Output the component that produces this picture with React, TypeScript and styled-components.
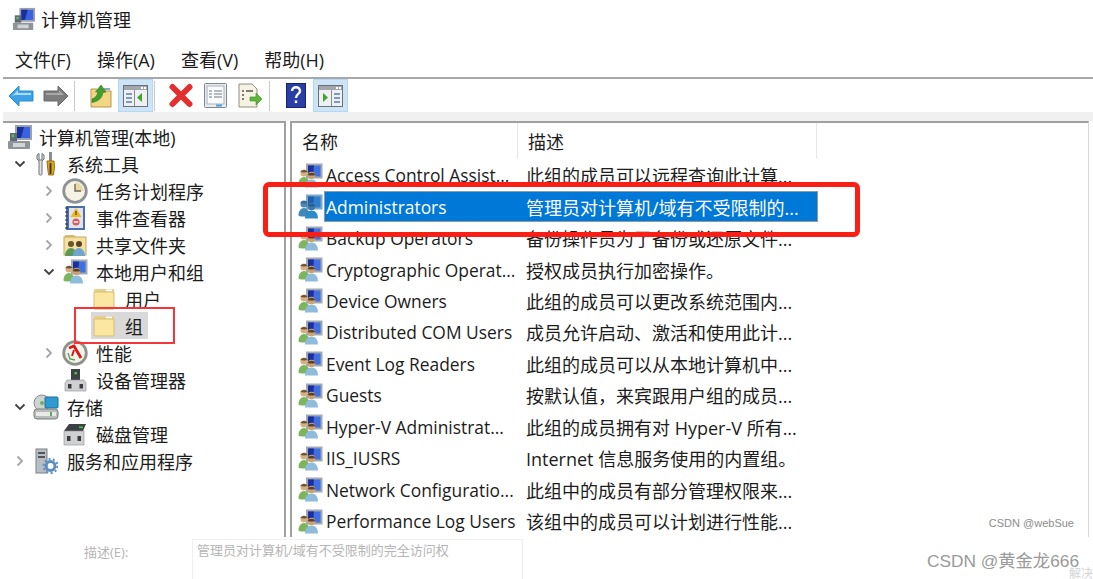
import React from 'react';
import styled, { createGlobalStyle } from 'styled-components';

const GlobalStyle = createGlobalStyle`
  html, body {
    margin: 0;
    padding: 0;
    background: #fff;
  }
  body {
    font-family: "Open Sans", "Noto Sans CJK SC", sans-serif;
    color: #1c1c1c;
  }
`;

const Window = styled.div`
  position: relative;
  width: 1093px;
  height: 579px;
  overflow: hidden;
  background: #fff;
`;

const TitleBar = styled.div`
  display: flex;
  align-items: center;
  gap: 5px;
  height: 37px;
  padding-left: 12px;
  font-size: 18px;
`;

const MenuBar = styled.div`
  box-sizing: border-box;
  display: flex;
  align-items: center;
  gap: 26px;
  height: 40px;
  padding: 4px 0 0 15px;
  font-size: 18px;
`;

const Toolbar = styled.div`
  display: flex;
  align-items: center;
  height: 33px;
  margin-left: 3px;
  border-top: 2px solid #a8a8a8;
`;

const ToolButton = styled.div<{ $active?: boolean }>`
  display: flex;
  align-items: center;
  justify-content: center;
  width: 35px;
  height: 33px;
  background: ${p => (p.$active ? '#cce4f7' : 'transparent')};
  box-shadow: ${p => (p.$active ? 'inset 0 0 0 1px #b5d7f3' : 'none')};
`;

const ToolDivider = styled.div`
  width: 1px;
  height: 30px;
  margin: 0 8px 0 1px;
  background: #c8c8c8;
`;

const Band = styled.div`
  height: 9px;
  margin-left: 3px;
  background: #f0f0f0;
`;

const Panes = styled.div`
  display: flex;
  gap: 4px;
  height: 416px;
  padding-left: 3px;
`;

const TreePane = styled.div`
  box-sizing: border-box;
  width: 283px;
  padding-left: 3px;
  border-top: 2px solid #a0a0a0;
  border-right: 2px solid #a0a0a0;
`;

const TreeRow = styled.div<{ $level: number; $root?: boolean }>`
  display: flex;
  align-items: center;
  height: 27px;
  padding-left: ${p => (p.$root ? 1 : p.$level * 29)}px;
  font-size: 18px;
  white-space: nowrap;
`;

const Twisty = styled.span`
  display: flex;
  align-items: center;
  justify-content: center;
  width: 27px;
  height: 27px;
  flex: none;
`;

const TreeItem = styled.div<{ $selected?: boolean; $root?: boolean }>`
  display: flex;
  align-items: center;
  gap: ${p => (p.$root ? 6 : 8)}px;
  height: 27px;
  padding-right: 5px;
  background: ${p => (p.$selected ? '#d9d9d9' : 'transparent')};
`;

const TreeIcon = styled.span`
  display: flex;
  align-items: center;
  justify-content: center;
  width: 26px;
  height: 27px;
  flex: none;
`;

const ListPane = styled.div`
  box-sizing: border-box;
  width: 799px;
  border-top: 2px solid #a0a0a0;
  border-left: 2px solid #a0a0a0;
  border-right: 1px solid #d8d8d8;
`;

const ListHeader = styled.div`
  display: flex;
  height: 35.5px;
  margin-bottom: 1px;
  font-size: 18px;
`;

const HeaderCell = styled.div<{ $width: number }>`
  box-sizing: border-box;
  display: flex;
  align-items: center;
  width: ${p => p.$width}px;
  padding-left: 10px;
  border-right: 1px solid #e6e6e6;
`;

const ListRow = styled.div`
  display: flex;
  align-items: center;
  height: 31.45px;
  font-size: 18px;
  white-space: nowrap;
`;

const RowIcon = styled.span`
  display: flex;
  align-items: center;
  justify-content: center;
  width: 25px;
  margin-left: 6px;
  flex: none;
`;

const RowBody = styled.div<{ $selected?: boolean }>`
  display: flex;
  align-items: center;
  width: 494px;
  height: 31px;
  margin-left: 1px;
  background: ${p => (p.$selected ? '#0078d7' : 'transparent')};
  color: ${p => (p.$selected ? '#fff' : 'inherit')};
  box-shadow: ${p => (p.$selected ? 'inset 0 0 0 1px #8f9aa3' : 'none')};
`;

const RowName = styled.span`
  width: 200px;
  padding-left: 2px;
  font-size: 17.4px;
  flex: none;
`;

const RowDesc = styled.span`
  flex: none;
`;

const FadedFooter = styled.div`
  display: flex;
  align-items: flex-start;
  height: 40px;
  padding: 2px 0 0 84px;
  font-size: 13px;
  color: #b5b5b5;
`;

const FadedLabel = styled.div`
  width: 108px;
  padding-top: 3px;
`;

const FadedBox = styled.div`
  box-sizing: border-box;
  width: 331px;
  height: 42px;
  padding: 0 4px;
  border: 1px solid #efefef;
`;

const Highlight = styled.div<{ $x: number; $y: number; $w: number; $h: number; $thick: number; $color: string; $radius: number }>`
  position: absolute;
  box-sizing: border-box;
  left: ${p => p.$x}px;
  top: ${p => p.$y}px;
  width: ${p => p.$w}px;
  height: ${p => p.$h}px;
  border: ${p => p.$thick}px solid ${p => p.$color};
  border-radius: ${p => p.$radius}px;
`;

const Watermark = styled.div<{ $right: number; $top: number; $size: number; $color: string; $line: number }>`
  position: absolute;
  right: ${p => p.$right}px;
  top: ${p => p.$top}px;
  font-family: "Liberation Sans", "Noto Sans CJK SC", sans-serif;
  font-size: ${p => p.$size}px;
  line-height: ${p => p.$line}px;
  color: ${p => p.$color};
  white-space: nowrap;
`;

const ComputerIcon = ({ size = 26 }: { size?: number }) => (
  <svg width={size} height={size} viewBox="0 0 26 26">
    <rect x="8" y="1" width="17" height="15" fill="#9aa3ad" />
    <rect x="10" y="3" width="13" height="11" fill="#3a62e0" />
    <path d="M10 3h7l-3 11h-4z" fill="#1b2f9c" />
    <rect x="3" y="9" width="7" height="8" fill="#5d6b74" />
    <circle cx="6" cy="12" r="1.400" fill="#5cc05c" />
    <rect x="1" y="17" width="22" height="8" rx="1" fill="#8f9499" />
    <rect x="6" y="19" width="12" height="4" fill="#d2d5d8" />
  </svg>
);

const UsersIcon = ({ size = 25, faded }: { size?: number; faded?: boolean }) => (
  <svg width={size} height={size} viewBox="0 0 25 25">
    <rect x="8" y="0.500" width="16.500" height="15" fill={faded ? '#7fa6cc' : '#a3a9b0'} />
    <rect x="10" y="2.500" width="12.500" height="11" fill={faded ? '#2f7fd0' : '#3f6fe0'} />
    <path d="M10 2.500h6l-1 11h-5z" fill={faded ? '#1f5fa8' : '#1d2f9c'} />
    <path d="M0.500 21c0-4 2.500-7 5.500-7s5.500 3 5.500 7c0 1-1 1.500-5.500 1.500S.5 22 .5 21z" fill={faded ? '#3f88b8' : '#7db55e'} />
    <circle cx="6" cy="10" r="3.600" fill={faded ? '#4d87b5' : '#d6b080'} />
    <path d="M2.500 9c.5-2.500 6-2.800 7 0-2 .6-5 .6-7 0z" fill={faded ? '#2f6a98' : '#6b5335'} />
    <path d="M7 24.500c0-5 2.500-8 6.500-8s6.500 3 6.500 8z" fill={faded ? '#2f8ac8' : '#8fbcdc'} />
    <circle cx="13.500" cy="12.500" r="3.800" fill={faded ? '#3d7aa8' : '#cba276'} />
    <path d="M9.800 12c.3-3 7-3.200 7.400 0-2.200.7-5.200.7-7.400 0z" fill={faded ? '#27608e' : '#55422b'} />
  </svg>
);

const FolderIcon = () => (
  <svg width="24" height="24" viewBox="0 0 24 24">
    <path d="M2 6V3.500C2 2.700 2.700 2 3.500 2H21c.6 0 1 .4 1 1v3z" fill="#e8d08c" />
    <rect x="14" y="2.500" width="6" height="2" fill="#fff" />
    <path d="M2 5h20v16c0 .6-.4 1-1 1H3c-.6 0-1-.4-1-1z" fill="#fbe6a2" stroke="#d8bd72" strokeWidth="1" />
  </svg>
);

const ToolsIcon = () => (
  <svg width="24" height="26" viewBox="0 0 24 26">
    <path d="M5 9V2.500L3 4v4l2 2v13c0 1.500 3 1.500 3 0V10l2-2V4L8 2.500V9z" fill="#e4e5e6" stroke="#6d6f72" strokeWidth="1" />
    <rect x="15" y="1" width="3" height="9" fill="#8a8d90" />
    <path d="M13 10h7l.5 6-1 8h-5l-1-8z" fill="#e8a80f" stroke="#7d5a05" strokeWidth=".8" />
    <rect x="15.500" y="12" width="2" height="11" fill="#3a3a3a" />
  </svg>
);

const ClockIcon = () => (
  <svg width="26" height="26" viewBox="0 0 26 26">
    <circle cx="13" cy="13" r="11.300" fill="#f6f3e6" stroke="#8e9296" strokeWidth="2.800" />
    <path d="M13 13V4.500A8.500 8.500 0 0 1 21.500 13z" fill="#ead9a8" />
    <path d="M13 6v7h6" fill="none" stroke="#6f6a50" strokeWidth="1.400" />
  </svg>
);

const EventIcon = () => (
  <svg width="24" height="26" viewBox="0 0 24 26">
    <rect x="3" y="1" width="19" height="24" fill="#4d6ea8" />
    <rect x="6" y="3" width="14" height="20" fill="#dfe4ee" />
    <path d="M2 3h3M2 7h3M2 11h3M2 15h3M2 19h3M2 23h3" stroke="#333" strokeWidth="1.200" />
    <path d="M13 3l5.500 9h-11z" fill="#f0b818" />
    <rect x="12.300" y="6" width="1.400" height="4" fill="#6b4a10" />
    <circle cx="13" cy="17" r="3.600" fill="#d85a5a" />
    <rect x="10.800" y="16.300" width="4.400" height="1.400" fill="#fff" />
  </svg>
);

const SharedFolderIcon = () => (
  <svg width="26" height="24" viewBox="0 0 26 24">
    <path d="M3 5V2h9l2 2h9v1z" fill="#d9c078" />
    <rect x="2" y="4" width="22" height="18" fill="#f6e0a0" stroke="#c8a75a" />
    <circle cx="9" cy="11" r="3" fill="#6b5335" />
    <path d="M3 23c0-5 3-8 6-8s6 3 6 8z" fill="#5c9a5c" />
    <circle cx="17" cy="11" r="3" fill="#55422b" />
    <path d="M11 23c0-5 3-8 6-8s6 3 6 8z" fill="#6fa5cf" />
  </svg>
);

const GaugeIcon = () => (
  <svg width="26" height="26" viewBox="0 0 26 26">
    <circle cx="13" cy="13" r="11.300" fill="#f2f4ec" stroke="#8e9288" strokeWidth="2.800" />
    <path d="M7 8l5-2 7 12" fill="none" stroke="#d81818" strokeWidth="2.800" />
    <path d="M12 10l-2 6" fill="none" stroke="#d81818" strokeWidth="2" />
    <path d="M6 13l2 6 5 1" fill="none" stroke="#5aa05a" strokeWidth="1.400" />
  </svg>
);

const DeviceIcon = () => (
  <svg width="24" height="24" viewBox="0 0 24 24">
    <rect x="8" y="1" width="9" height="12" fill="#3f4244" />
    <rect x="11.500" y="4" width="2.400" height="2.400" fill="#58c058" />
    <path d="M4 12h17l2 3v8H2v-8z" fill="#cfd0d1" stroke="#8c8e90" strokeWidth=".6" />
    <rect x="5" y="16" width="3.500" height="4.500" fill="#3a3c3e" />
    <rect x="16.500" y="16" width="3.500" height="4.500" fill="#3a3c3e" />
  </svg>
);

const StorageIcon = () => (
  <svg width="26" height="26" viewBox="0 0 26 26">
    <ellipse cx="9" cy="9" rx="8" ry="8" fill="#cfd3cf" stroke="#8a8d8a" />
    <circle cx="9" cy="9" r="2" fill="#68b068" />
    <rect x="12" y="3" width="13" height="11" rx="1" fill="#2f9ad0" stroke="#1d6f9d" />
    <rect x="1" y="15" width="24" height="10" rx="3" fill="#b8bcb8" stroke="#7a7d7a" />
    <rect x="3" y="18" width="20" height="4" fill="#e8eae8" />
    <rect x="17" y="18" width="2" height="4" fill="#5aa85a" />
  </svg>
);

const DiskIcon = () => (
  <svg width="26" height="24" viewBox="0 0 26 24">
    <path d="M7 2h17l-3 7H2z" fill="#3d4042" />
    <rect x="17" y="4.500" width="4" height="1.600" fill="#50c050" />
    <path d="M2 9h20v14H2z" fill="#cfd0d1" stroke="#8c8e90" strokeWidth=".6" />
    <rect x="5" y="14" width="3.500" height="5" fill="#3a3c3e" />
    <rect x="15.500" y="14" width="3.500" height="5" fill="#3a3c3e" />
  </svg>
);

const ServicesIcon = () => (
  <svg width="24" height="26" viewBox="0 0 24 26">
    <rect x="2" y="1" width="11" height="24" fill="#b8bec4" stroke="#7b8187" />
    <rect x="4" y="4" width="7" height="2" fill="#51565b" />
    <rect x="4" y="8" width="7" height="2" fill="#51565b" />
    <circle cx="16.500" cy="18" r="4.500" fill="none" stroke="#5a8fc0" strokeWidth="3" />
    <circle cx="16.500" cy="18" r="7" fill="none" stroke="#5a8fc0" strokeWidth="2" strokeDasharray="2 2.400" />
  </svg>
);

const ArrowLeftIcon = () => (
  <svg width="26" height="22" viewBox="0 0 26 22">
    <path d="M1 11 11 1v5h14v10H11v5z" fill="#3ea2e6" stroke="#2a8ccc" strokeLinejoin="round" />
    <path d="M4 11 10 5v3h13v2H7z" fill="#a8dcf8" />
  </svg>
);

const ArrowRightIcon = () => (
  <svg width="26" height="22" viewBox="0 0 26 22">
    <path d="M25 11 15 1v5H1v10h14v5z" fill="#7d7d7d" stroke="#6a6a6a" strokeLinejoin="round" />
    <path d="M3 8h13V5l5 5H3z" fill="#a8a8a8" />
  </svg>
);

const UpFolderIcon = () => (
  <svg width="24" height="26" viewBox="0 0 24 26">
    <path d="M2 6h6l2 2h12v16H2z" fill="#f3d684" stroke="#b9954a" />
    <rect x="15" y="5" width="6" height="2" fill="#8fa8c8" />
    <path d="M3 16c3-1 5-3 6-7L6.500 9 12 2l5 7-3 .5c-1 6-5 9-11 10z" fill="#3f9e2d" stroke="#2d7a1e" strokeWidth=".6" />
  </svg>
);

const PanelIcon = ({ side }: { side: 'left' | 'right' }) => (
  <svg width="25" height="22" viewBox="0 0 25 22">
    <rect x=".5" y=".5" width="24" height="21" fill="#eef0f2" stroke="#6d7176" />
    <rect x="1" y="1" width="23" height="4" fill="#a3a7ab" />
    <rect x="18" y="2" width="2" height="2" fill="#fff" />
    <rect x="21" y="2" width="2" height="2" fill="#fff" />
    {side === 'left' ? (
      <>
        <rect x="3" y="8" width="6" height="2" fill="#7d9ac0" />
        <rect x="3" y="12" width="6" height="2" fill="#7d9ac0" />
        <rect x="3" y="16" width="6" height="2" fill="#7d9ac0" />
        <rect x="11" y="5" width="1" height="16" fill="#8a8f94" />
        <path d="M19 8v9l-5-4.500z" fill="#3ea52f" />
      </>
    ) : (
      <>
        <path d="M5 8v9l5-4.500z" fill="#3ea52f" />
        <rect x="13" y="5" width="1" height="16" fill="#8a8f94" />
        <rect x="16" y="8" width="6" height="2" fill="#7d9ac0" />
        <rect x="16" y="12" width="6" height="2" fill="#7d9ac0" />
        <rect x="16" y="16" width="6" height="2" fill="#7d9ac0" />
      </>
    )}
  </svg>
);

const DeleteIcon = () => (
  <svg width="26" height="25" viewBox="0 0 26 25">
    <path d="M4.500 4 21.500 21M21.500 4 4.500 21" fill="none" stroke="#e42f2f" strokeWidth="6" strokeLinecap="round" />
  </svg>
);

const PropsIcon = () => (
  <svg width="23" height="25" viewBox="0 0 23 25">
    <rect x=".5" y=".5" width="22" height="24" rx="1" fill="#e8ecef" stroke="#7d8790" />
    <rect x="3" y="3" width="17" height="18" fill="#fafbfc" stroke="#aab2ba" />
    <path d="M5 8h3M5 11h3M5 14h3M10 8h8M10 11h8M10 14h8" stroke="#6d7880" strokeWidth="1.200" />
    <rect x="12" y="21.500" width="6" height="2" fill="#4aa0e0" />
  </svg>
);

const ExportIcon = () => (
  <svg width="25" height="25" viewBox="0 0 25 25">
    <path d="M1 1h13l5 5v18H1z" fill="#f5f2e2" stroke="#8f8f80" />
    <path d="M4 8h2M4 12h2M4 16h2M8 8h7" stroke="#555" strokeWidth="1.300" />
    <path d="M12 14h6v-4l6 6-6 6v-4h-6z" fill="#5cb83a" stroke="#3d8a25" strokeWidth=".6" />
  </svg>
);

const HelpIcon = () => (
  <svg width="20" height="25" viewBox="0 0 20 25">
    <rect x=".5" y=".5" width="19" height="24" fill="#2a3ea8" stroke="#16236a" />
    <path d="M6 8c0-5 8-5 8 0 0 3-4 3-4 7" fill="none" stroke="#fff" strokeWidth="2.400" />
    <rect x="8.800" y="17.500" width="2.400" height="2.600" fill="#fff" />
  </svg>
);

const ChevronDown = () => (
  <svg width="12" height="8" viewBox="0 0 12 8">
    <path d="M1.500 1.500 6 6l4.500-4.500" fill="none" stroke="#404040" strokeWidth="1.800" />
  </svg>
);

const ChevronRight = () => (
  <svg width="8" height="12" viewBox="0 0 8 12">
    <path d="M1.500 1.500 6 6l-4.500 4.500" fill="none" stroke="#a6a6a6" strokeWidth="1.800" />
  </svg>
);

type TreeNode = {
  label: string;
  level: number;
  twisty?: 'open' | 'closed';
  icon: React.ReactNode;
  selected?: boolean;
  root?: boolean;
};

const treeNodes: TreeNode[] = [
  { label: '计算机管理(本地)', level: 0, icon: <ComputerIcon />, root: true },
  { label: '系统工具', level: 0, twisty: 'open', icon: <ToolsIcon /> },
  { label: '任务计划程序', level: 1, twisty: 'closed', icon: <ClockIcon /> },
  { label: '事件查看器', level: 1, twisty: 'closed', icon: <EventIcon /> },
  { label: '共享文件夹', level: 1, twisty: 'closed', icon: <SharedFolderIcon /> },
  { label: '本地用户和组', level: 1, twisty: 'open', icon: <UsersIcon /> },
  { label: '用户', level: 2, icon: <FolderIcon /> },
  { label: '组', level: 2, icon: <FolderIcon />, selected: true },
  { label: '性能', level: 1, twisty: 'closed', icon: <GaugeIcon /> },
  { label: '设备管理器', level: 1, icon: <DeviceIcon /> },
  { label: '存储', level: 0, twisty: 'open', icon: <StorageIcon /> },
  { label: '磁盘管理', level: 1, icon: <DiskIcon /> },
  { label: '服务和应用程序', level: 0, twisty: 'closed', icon: <ServicesIcon /> },
];

const groups = [
  ['Access Control Assist...', '此组的成员可以远程查询此计算...'],
  ['Administrators', '管理员对计算机/域有不受限制的...'],
  ['Backup Operators', '备份操作员为了备份或还原文件...'],
  ['Cryptographic Operat...', '授权成员执行加密操作。'],
  ['Device Owners', '此组的成员可以更改系统范围内...'],
  ['Distributed COM Users', '成员允许启动、激活和使用此计...'],
  ['Event Log Readers', '此组的成员可以从本地计算机中...'],
  ['Guests', '按默认值，来宾跟用户组的成员...'],
  ['Hyper-V Administrat...', '此组的成员拥有对 Hyper-V 所有...'],
  ['IIS_IUSRS', 'Internet 信息服务使用的内置组。'],
  ['Network Configuratio...', '此组中的成员有部分管理权限来...'],
  ['Performance Log Users', '该组中的成员可以计划进行性能...'],
];

export default function App() {
  return (
    <Window>
      <GlobalStyle />
      <TitleBar>
        <ComputerIcon size={24} />
        计算机管理
      </TitleBar>
      <MenuBar>
        <span>文件(F)</span>
        <span>操作(A)</span>
        <span>查看(V)</span>
        <span>帮助(H)</span>
      </MenuBar>
      <Toolbar>
        <ToolButton><ArrowLeftIcon /></ToolButton>
        <ToolButton><ArrowRightIcon /></ToolButton>
        <ToolDivider />
        <ToolButton><UpFolderIcon /></ToolButton>
        <ToolButton $active><PanelIcon side="left" /></ToolButton>
        <ToolDivider />
        <ToolButton><DeleteIcon /></ToolButton>
        <ToolButton><PropsIcon /></ToolButton>
        <ToolButton><ExportIcon /></ToolButton>
        <ToolDivider />
        <ToolButton><HelpIcon /></ToolButton>
        <ToolButton $active><PanelIcon side="right" /></ToolButton>
      </Toolbar>
      <Band />
      <Panes>
        <TreePane>
          {treeNodes.map(node => (
            <TreeRow key={node.label} $level={node.level} $root={node.root}>
              {!node.root && (
                <Twisty>
                  {node.twisty === 'open' && <ChevronDown />}
                  {node.twisty === 'closed' && <ChevronRight />}
                </Twisty>
              )}
              <TreeItem $selected={node.selected} $root={node.root}>
                <TreeIcon>{node.icon}</TreeIcon>
                {node.label}
              </TreeItem>
            </TreeRow>
          ))}
        </TreePane>
        <ListPane>
          <ListHeader>
            <HeaderCell $width={226}>名称</HeaderCell>
            <HeaderCell $width={299}>描述</HeaderCell>
          </ListHeader>
          {groups.map(([name, desc], i) => (
            <ListRow key={name}>
              <RowIcon><UsersIcon faded={i === 1} /></RowIcon>
              <RowBody $selected={i === 1}>
                <RowName>{name}</RowName>
                <RowDesc>{desc}</RowDesc>
              </RowBody>
            </ListRow>
          ))}
        </ListPane>
      </Panes>
      <FadedFooter>
        <FadedLabel>描述(E):</FadedLabel>
        <FadedBox>管理员对计算机/域有不受限制的完全访问权</FadedBox>
      </FadedFooter>
      <Highlight $x={263} $y={182} $w={597} $h={55} $thick={5} $color="#fa1e14" $radius={6} />
      <Highlight $x={74} $y={307} $w={101} $h={37} $thick={2} $color="#f5353a" $radius={0} />
      <Watermark $right={19} $top={517} $size={11} $color="#8c8c8c" $line={13}>CSDN @webSue</Watermark>
      <Watermark $right={14} $top={553} $size={17.3} $color="#9a9a9a" $line={16}>CSDN @黄金龙666</Watermark>
      <Watermark $right={0} $top={569} $size={12} $color="#d4d4d4" $line={10}>解决</Watermark>
    </Window>
  );
}
